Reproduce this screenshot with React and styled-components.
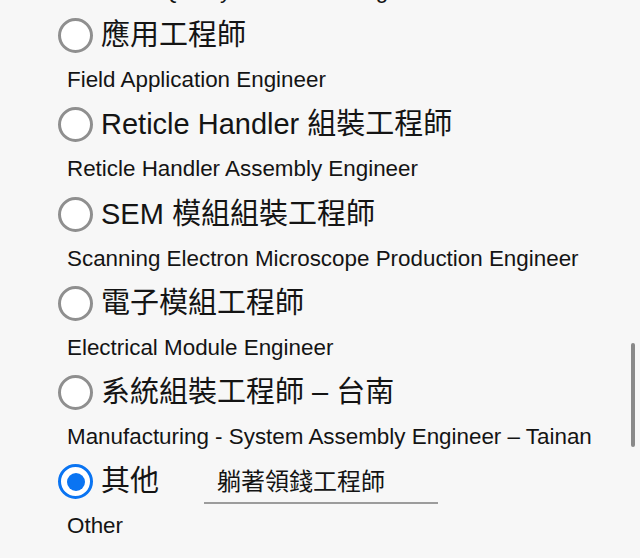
import React, { useState } from "react";
import styled, { createGlobalStyle } from "styled-components";

const FONT = `"Liberation Sans", Arial, "Noto Sans CJK TC", sans-serif`;

const GlobalStyle = createGlobalStyle`
  html, body {
    margin: 0;
    padding: 0;
    background: #f7f7f7;
    overflow: hidden;
  }
  body {
    font-family: ${FONT};
    color: #141414;
  }
`;

const OPTIONS = [
  { id: "sqa", label: "軟體品質保證工程師", sub: "Software Quality Assurance Engineer" },
  { id: "fae", label: "應用工程師", sub: "Field Application Engineer" },
  { id: "rh", label: "Reticle Handler 組裝工程師", sub: "Reticle Handler Assembly Engineer" },
  { id: "sem", label: "SEM 模組組裝工程師", sub: "Scanning Electron Microscope Production Engineer" },
  { id: "em", label: "電子模組工程師", sub: "Electrical Module Engineer" },
  { id: "sys", label: "系統組裝工程師 – 台南", sub: "Manufacturing - System Assembly Engineer – Tainan" },
];

function App() {
  const [selected, setSelected] = useState("other");
  const [other, setOther] = useState("躺著領錢工程師");

  return (
    <>
      <GlobalStyle />
      <Page>
        <List>
          {OPTIONS.map((opt) => (
            <Option key={opt.id}>
              <Row>
                <Radio
                  type="radio"
                  name="job"
                  id={opt.id}
                  checked={selected === opt.id}
                  onChange={() => setSelected(opt.id)}
                />
                <Label htmlFor={opt.id}>{opt.label}</Label>
              </Row>
              <Subtitle>{opt.sub}</Subtitle>
            </Option>
          ))}
          <Option>
            <Row>
              <Radio
                type="radio"
                name="job"
                id="other"
                checked={selected === "other"}
                onChange={() => setSelected("other")}
              />
              <Label htmlFor="other">其他</Label>
              <OtherInput
                type="text"
                value={other}
                onChange={(event) => setOther(event.target.value)}
                onFocus={() => setSelected("other")}
              />
            </Row>
            <Subtitle>Other</Subtitle>
          </Option>
        </List>
      </Page>
      <ScrollThumb />
    </>
  );
}

const Page = styled.main`
  height: 558px;
  overflow: hidden;
  padding-left: 58px;
`;

const List = styled.div`
  display: flex;
  flex-direction: column;
  margin-top: -76px;
`;

const Option = styled.div`
  display: flex;
  flex-direction: column;
`;

const Row = styled.div`
  display: flex;
  align-items: center;
  height: 45px;
`;

const Radio = styled.input`
  appearance: none;
  box-sizing: border-box;
  flex: none;
  width: 35px;
  height: 35px;
  margin: 0 8px 0 0;
  border: 3px solid #8f8f8f;
  border-radius: 50%;
  background: #fff;
  display: grid;
  place-items: center;
  cursor: pointer;

  &::before {
    content: "";
    width: 18px;
    height: 18px;
    border-radius: 50%;
    background: transparent;
  }

  &:checked {
    border: 3.5px solid #0a74f2;
  }

  &:checked::before {
    background: #0a74f2;
  }
`;

const Label = styled.label`
  font-family: ${FONT};
  font-size: 29px;
  line-height: 45px;
  white-space: nowrap;
  color: #141414;
`;

const Subtitle = styled.div`
  height: 44.2px;
  display: flex;
  align-items: center;
  padding-left: 9px;
  font-family: ${FONT};
  font-size: 22.4px;
  white-space: nowrap;
  color: #141414;
`;

const OtherInput = styled.input`
  box-sizing: border-box;
  width: 234px;
  height: 42px;
  margin: 0 0 0 45px;
  align-self: flex-end;
  padding: 0 0 6px 13px;
  border: none;
  border-bottom: 2px solid #9c9c9c;
  background: transparent;
  font-family: ${FONT};
  font-size: 24px;
  color: #141414;
  outline: none;
`;

const ScrollThumb = styled.div`
  position: fixed;
  top: 343px;
  right: 5px;
  width: 4px;
  height: 104px;
  border-radius: 2px;
  background: #8a8a8a;
`;

export default App;
